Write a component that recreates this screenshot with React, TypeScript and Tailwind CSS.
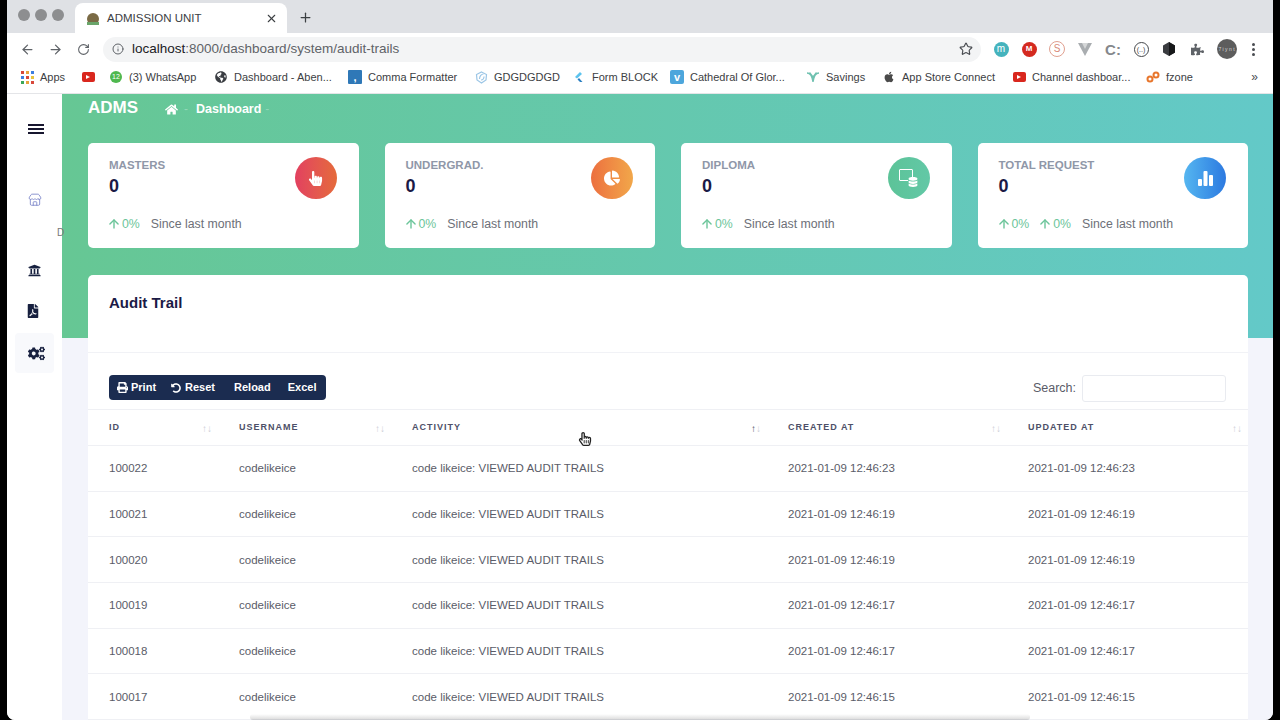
import React from 'react';
import { ArrowLeft, ArrowRight, RotateCw, Info, Star, Store, ArrowUp, X, Plus } from 'lucide-react';
import {
  FaHome, FaHandPointer, FaChartPie, FaUniversity, FaFilePdf, FaCogs,
  FaPrint, FaUndoAlt, FaPuzzlePiece, FaApple, FaGlobeAmericas, FaRegHandPointer, FaDatabase,
} from 'react-icons/fa';

const YouTubeMark = () => (
  <span className="flex h-[10px] w-[13px] items-center justify-center rounded-[2px] bg-[#d9271e]">
    <span className="h-0 w-0 border-y-[2.5px] border-l-[4px] border-y-transparent border-l-white" />
  </span>
);

const AppsGrid = () => (
  <svg width="13" height="13" viewBox="0 0 13 13">
    {[
      ['#d8483b', '#e8a33d', '#3d7fe0'],
      ['#3d7fe0', '#d8483b', '#e8c33d'],
      ['#3aa757', '#e8a33d', '#d8483b'],
    ].map((row, y) =>
      row.map((c, x) => <rect key={`${x}${y}`} x={x * 5} y={y * 5} width="3" height="3" fill={c} />),
    )}
  </svg>
);

const bookmarks = [
  { w: 'w-[61px]', label: 'Apps', icon: <AppsGrid /> },
  { w: 'w-[28px]', label: '', icon: <YouTubeMark /> },
  {
    w: 'w-[105px]',
    label: '(3) WhatsApp',
    icon: (
      <span className="flex h-[12px] w-[12px] items-center justify-center rounded-full bg-[#4fb84f] text-[7px] text-white">12</span>
    ),
  },
  { w: 'w-[134px]', label: 'Dashboard - Aben...', icon: <FaGlobeAmericas size={12} className="text-[#3a3d42]" /> },
  {
    w: 'w-[126px]',
    label: 'Comma Formatter',
    icon: (
      <span className="flex h-[14px] w-[14px] items-center justify-center rounded-[1px] bg-[#2f78b7] text-[11px] font-bold leading-[14px] text-white">,</span>
    ),
  },
  {
    w: 'w-[98px]',
    label: 'GDGDGDGD',
    icon: (
      <svg width="13" height="13" viewBox="0 0 13 13" fill="none" stroke="#9cc6e6" strokeWidth="1.2">
        <path d="M6.5 1 11.5 3.5 11 9 6.5 12 2 9 1.5 3.5Z" />
        <path d="M4.5 8c0-3 2-5 4-5M6 9c2 0 3-2 3-3.500" />
      </svg>
    ),
  },
  {
    w: 'w-[98px]',
    label: 'Form BLOCK',
    icon: (
      <svg width="10" height="12" viewBox="0 0 10 12">
        <path d="M6 1 1 6l2 1.500L8 3Z" fill="#5cc3ee" />
        <path d="M5 7 3.500 8.500 6 11h2.500Z" fill="#2a7fc1" />
      </svg>
    ),
  },
  {
    w: 'w-[136px]',
    label: 'Cathedral Of Glor...',
    icon: (
      <span className="flex h-[14px] w-[14px] items-center justify-center rounded-[2px] bg-[#4da6dc] text-[11px] font-bold leading-none text-white">v</span>
    ),
  },
  {
    w: 'w-[76px]',
    label: 'Savings',
    icon: (
      <svg width="14" height="13" viewBox="0 0 14 13" fill="none" stroke="#6fc1b0" strokeWidth="1.3">
        <path d="M1 2c3 0 5 2 6 9M13 2c-3 0-5 2-6 9M3.500 1.500 7 6l3.500-4.500" />
      </svg>
    ),
  },
  { w: 'w-[130px]', label: 'App Store Connect', icon: <FaApple size={12} className="text-[#4a4a4a]" /> },
  { w: 'w-[134px]', label: 'Channel dashboar...', icon: <YouTubeMark /> },
  {
    w: 'w-[100px]',
    label: 'fzone',
    icon: (
      <svg width="14" height="12" viewBox="0 0 14 12" fill="none" stroke="#e8762c" strokeWidth="2">
        <circle cx="4" cy="8" r="2.500" />
        <circle cx="10" cy="4" r="2.500" />
      </svg>
    ),
  },
];

const stats = [
  {
    title: 'Masters',
    circle: 'bg-gradient-to-r from-[#e2405f] to-[#e56a3a]',
    icon: <FaHandPointer size={15} />,
    extra: false,
  },
  {
    title: 'Undergrad.',
    circle: 'bg-gradient-to-r from-[#ec6f3f] to-[#f1a74a]',
    icon: <FaChartPie size={16} />,
    extra: false,
  },
  {
    title: 'Diploma',
    circle: 'bg-gradient-to-r from-[#5cc398] to-[#62c8a6]',
    icon: (
      <span className="relative block h-[18px] w-[19px]">
        <span className="block h-[12px] w-[14px] rounded-[1px] border-[1.5px] border-white" />
        <FaDatabase size={10} className="absolute bottom-0 right-0 bg-[#5fc69f]" />
      </span>
    ),
    extra: false,
  },
  {
    title: 'Total Request',
    circle: 'bg-gradient-to-r from-[#56b6f0] to-[#2d79e0]',
    icon: (
      <svg width="15" height="15" viewBox="0 0 15 15" fill="currentColor">
        <rect x="0" y="8" width="4" height="7" rx="1" />
        <rect x="5.5" y="0" width="4" height="15" rx="1" />
        <rect x="11" y="4" width="4" height="11" rx="1" />
      </svg>
    ),
    extra: true,
  },
];

const rows = [
  ['100022', '2021-01-09 12:46:23'],
  ['100021', '2021-01-09 12:46:19'],
  ['100020', '2021-01-09 12:46:19'],
  ['100019', '2021-01-09 12:46:17'],
  ['100018', '2021-01-09 12:46:17'],
  ['100017', '2021-01-09 12:46:15'],
];

const Percent = () => (
  <span className="mr-[11px] flex items-center text-[#6cc59a]">
    <ArrowUp size={14} strokeWidth={2.4} className="-ml-[2px] mr-[1px]" />
    0%
  </span>
);

const Heading = ({ label, w, active }: { label: string; w: string; active?: boolean }) => (
  <th className={`${w} p-0 pl-[21px] pr-[6px] text-left align-middle`}>
    <div className="flex items-center justify-between">
      <span className="text-[9px] font-bold uppercase tracking-[1px] text-[#4e5068]">{label}</span>
      <span className="mt-[2px] text-[10px] font-normal leading-none text-[#c9ccd4]">
        <span className={active ? 'text-[#44475a]' : ''}>↑</span>↓
      </span>
    </div>
  </th>
);

export default function App() {
  return (
    <div className="relative flex h-[720px] w-[1280px] overflow-hidden bg-black px-[7px] font-['Liberation_Sans',sans-serif]">
      <div className="flex h-full w-full flex-col overflow-hidden rounded-b-[8px] bg-white">
        {/* tab strip */}
        <div className="flex h-[33px] shrink-0 items-end bg-[#dfe1e5]">
          <div className="mb-[12px] ml-[11px] flex gap-[5px]">
            <span className="h-[12px] w-[12px] rounded-full bg-[#8d8e90]" />
            <span className="h-[12px] w-[12px] rounded-full bg-[#8d8e90]" />
            <span className="h-[12px] w-[12px] rounded-full bg-[#8d8e90]" />
          </div>
          <div className="ml-[11px] flex h-[30px] w-[212px] items-center rounded-t-[8px] bg-white pl-[12px] pr-[9px] pt-[1px]">
            <span className="relative mr-[8px] block h-[12px] w-[12px] rounded-full bg-[#7a6a45]">
              <span className="absolute bottom-0 left-0 h-[3px] w-[12px] bg-[#6aa56a]" />
            </span>
            <span className="flex-1 text-[11.5px] text-[#3c4043]">ADMISSION UNIT</span>
            <X size={13} strokeWidth={2} className="text-[#3c4043]" />
          </div>
          <Plus size={15} strokeWidth={2} className="mb-[8px] ml-[11px] text-[#3c4043]" />
        </div>

        {/* toolbar */}
        <div className="flex h-[32px] shrink-0 items-center bg-white pl-[13px]">
          <ArrowLeft size={15} className="text-[#5f6368]" />
          <ArrowRight size={15} className="ml-[13px] text-[#5f6368]" />
          <RotateCw size={13} className="ml-[14px] text-[#5f6368]" />
          <div className="ml-[13px] flex h-[25px] w-[878px] items-center rounded-full bg-[#f3f4f5] pl-[9px] pr-[8px]">
            <Info size={12} className="text-[#5f6368]" />
            <span className="ml-[8px] flex-1 text-[13.500px] text-[#5f6368]">
              <span className="text-[#202124]">localhost</span>:8000/dashboard/system/audit-trails
            </span>
            <Star size={14} className="text-[#4a4d52]" />
          </div>
          <div className="ml-[6px] grid w-[280px] grid-cols-10 items-center justify-items-center">
            <span className="flex h-[15px] w-[15px] items-center justify-center rounded-full bg-[#45b3bd] text-[10px] leading-none text-white">m</span>
            <span className="flex h-[15px] w-[15px] items-center justify-center rounded-full bg-[#d42a20] text-[8px] font-bold leading-none text-white">M</span>
            <span className="flex h-[16px] w-[16px] items-center justify-center rounded-full border border-[#e0a090] text-[10px] leading-none text-[#d98a78]">S</span>
            <svg width="14" height="13" viewBox="0 0 14 13">
              <path d="M0 0h14L7 13Z" fill="#a9adb0" />
              <path d="M4 0h6L7 6Z" fill="#d5d7d8" />
            </svg>
            <span className="text-[15px] font-bold leading-none text-[#85888c]">C:</span>
            <span className="flex h-[15px] w-[15px] items-center justify-center rounded-full border border-[#44474b] text-[7px] leading-none text-[#44474b]">(..)</span>
            <svg width="12" height="14" viewBox="0 0 12 14">
              <path d="M6 0 12 3.500v7L6 14 0 10.500v-7Z" fill="#3a3c40" />
              <path d="M6 0 12 3.500v7L6 14Z" fill="#17181a" />
            </svg>
            <FaPuzzlePiece size={13} className="text-[#5f6368]" />
            <span className="ml-[3px] flex h-[20px] w-[20px] items-center justify-center rounded-full bg-[#5d5d5d] text-[5px] leading-none text-[#d8d8d8]">7 i y n t</span>
            <span className="ml-[1px] flex flex-col gap-[2px]">
              <span className="h-[3px] w-[3px] rounded-full bg-[#4a4d52]" />
              <span className="h-[3px] w-[3px] rounded-full bg-[#4a4d52]" />
              <span className="h-[3px] w-[3px] rounded-full bg-[#4a4d52]" />
            </span>
          </div>
        </div>

        {/* bookmarks */}
        <div className="flex h-[29px] shrink-0 items-center border-b border-[#e4e5e8] bg-white pb-[4px] pl-[13px] pr-[15px]">
          {bookmarks.map((b) => (
            <div key={b.w + b.label} className={`${b.w} flex shrink-0 items-center gap-[6px] text-[11px] text-[#3c4043]`}>
              <span className="flex w-[14px] justify-center">{b.icon}</span>
              {b.label && <span className="whitespace-nowrap">{b.label}</span>}
            </div>
          ))}
          <span className="ml-auto text-[12px] leading-none text-[#4a4d52]">»</span>
        </div>

        {/* page */}
        <div className="flex min-h-0 flex-1">
          <aside className="relative flex w-[55px] shrink-0 flex-col items-center bg-white">
            <div className="ml-[2px] mt-[30px] flex flex-col gap-[2px]">
              <span className="h-[2px] w-[16px] bg-[#17162f]" />
              <span className="h-[2px] w-[16px] bg-[#17162f]" />
              <span className="h-[2px] w-[16px] bg-[#17162f]" />
            </div>
            <Store size={14} strokeWidth={1.5} className="mt-[59px] text-[#7d87c9]" />
            <FaUniversity size={13} className="mt-[57px] text-[#17203f]" />
            <FaFilePdf size={14} className="mr-[4px] mt-[27px] text-[#17203f]" />
            <div className="mt-[15px] flex h-[40px] w-[39px] items-center justify-center rounded-[4px] bg-[#f8f9fc]">
              <FaCogs size={17} className="ml-[3px] text-[#17203f]" />
            </div>
            <span className="absolute left-[50px] top-[134px] text-[10px] leading-none text-[#777]">D</span>
          </aside>
          <main className="min-w-0 flex-1 overflow-hidden bg-[#f3f4fb] bg-[linear-gradient(90deg,#66c794,#63c9c8)] bg-[length:100%_244px] bg-no-repeat px-[25px] pl-[26px]">
            <div className="flex h-[26px] items-center pt-[2px] text-white">
              <span className="text-[17px] font-bold">ADMS</span>
              <div className="ml-[27px] mt-[2px] flex items-center">
                <FaHome size={13} />
                <span className="ml-[6px] text-[12px] text-white/30">-</span>
                <span className="ml-[8px] text-[12.500px] font-bold">Dashboard</span>
                <span className="ml-[4px] text-[12px] text-white/30">-</span>
              </div>
            </div>
            <div className="mt-[23px] grid grid-cols-4 gap-[26px]">
              {stats.map((s) => (
                <div key={s.title} className="relative h-[105px] rounded-[5px] bg-white pl-[21px] pt-[15px]">
                  <div className="text-[11.500px] font-bold uppercase leading-[14px] text-[#8f97a8]">{s.title}</div>
                  <div className="mt-[3px] text-[18px] font-bold leading-[22px] text-[#1b1a46]">0</div>
                  <div className="mt-[18px] flex items-center text-[12.300px] leading-[18px] text-[#6d7078]">
                    <Percent />
                    {s.extra && <Percent />}
                    <span className="whitespace-nowrap">Since last month</span>
                  </div>
                  <div className={`absolute right-[22px] top-[14px] flex h-[42px] w-[42px] items-center justify-center rounded-full text-white ${s.circle}`}>
                    {s.icon}
                  </div>
                </div>
              ))}
            </div>

            <section className="mt-[27px] rounded-t-[5px] bg-white">
              <div className="h-[78px] border-b border-[#f1f2f6] pl-[21px] pt-[19px]">
                <h2 className="text-[15px] font-bold leading-[18px] text-[#1b1a46]">Audit Trail</h2>
              </div>
              <div className="flex h-[56px] items-start justify-between pl-[21px] pr-[22px] pt-[22px]">
                <div className="flex h-[25px] w-[217px] items-center rounded-[4px] bg-[#1b2c50] pl-[8px] text-[11px] font-bold text-white">
                  <FaPrint size={11} />
                  <span className="ml-[3px]">Print</span>
                  <FaUndoAlt size={10} className="ml-[15px]" />
                  <span className="ml-[4px]">Reset</span>
                  <span className="ml-[19px]">Reload</span>
                  <span className="ml-[17px]">Excel</span>
                </div>
                <label className="flex items-center text-[12.500px] text-[#5a5c68]">
                  Search:
                  <input className="ml-[6px] h-[27px] w-[144px] rounded-[3px] border border-[#e9ebf0] bg-white" />
                </label>
              </div>
              <table className="w-full table-fixed border-collapse text-[11.500px] text-[#5a5c68]">
                <thead>
                  <tr className="h-[36px] border-y border-[#eff0f4]">
                    <Heading label="ID" w="w-[130px]" />
                    <Heading label="Username" w="w-[173px]" />
                    <Heading label="Activity" w="w-[376px]" active />
                    <Heading label="Created At" w="w-[240px]" />
                    <Heading label="Updated At" w="w-[241px]" />
                  </tr>
                </thead>
                <tbody>
                  {rows.map(([id, time]) => (
                    <tr key={id} className="h-[45.700px] border-b border-[#eff0f4]">
                      <td className="pl-[21px] pt-[1px]">{id}</td>
                      <td className="pl-[21px] pt-[1px]">codelikeice</td>
                      <td className="pl-[21px] pt-[1px]">code likeice: VIEWED AUDIT TRAILS</td>
                      <td className="pl-[21px] pt-[1px]">{time}</td>
                      <td className="pl-[21px] pt-[1px]">{time}</td>
                    </tr>
                  ))}
                </tbody>
              </table>
            </section>
          </main>
        </div>
      </div>

      {/* pointer caught in the recording */}
      <FaRegHandPointer size={14} className="absolute left-[578px] top-[432px] text-[#222]" />
      {/* dock shadow along the bottom edge */}
      <div className="absolute bottom-0 left-[250px] h-[6px] w-[780px] rounded-full bg-gradient-to-t from-black/15 to-transparent" />
    </div>
  );
}
